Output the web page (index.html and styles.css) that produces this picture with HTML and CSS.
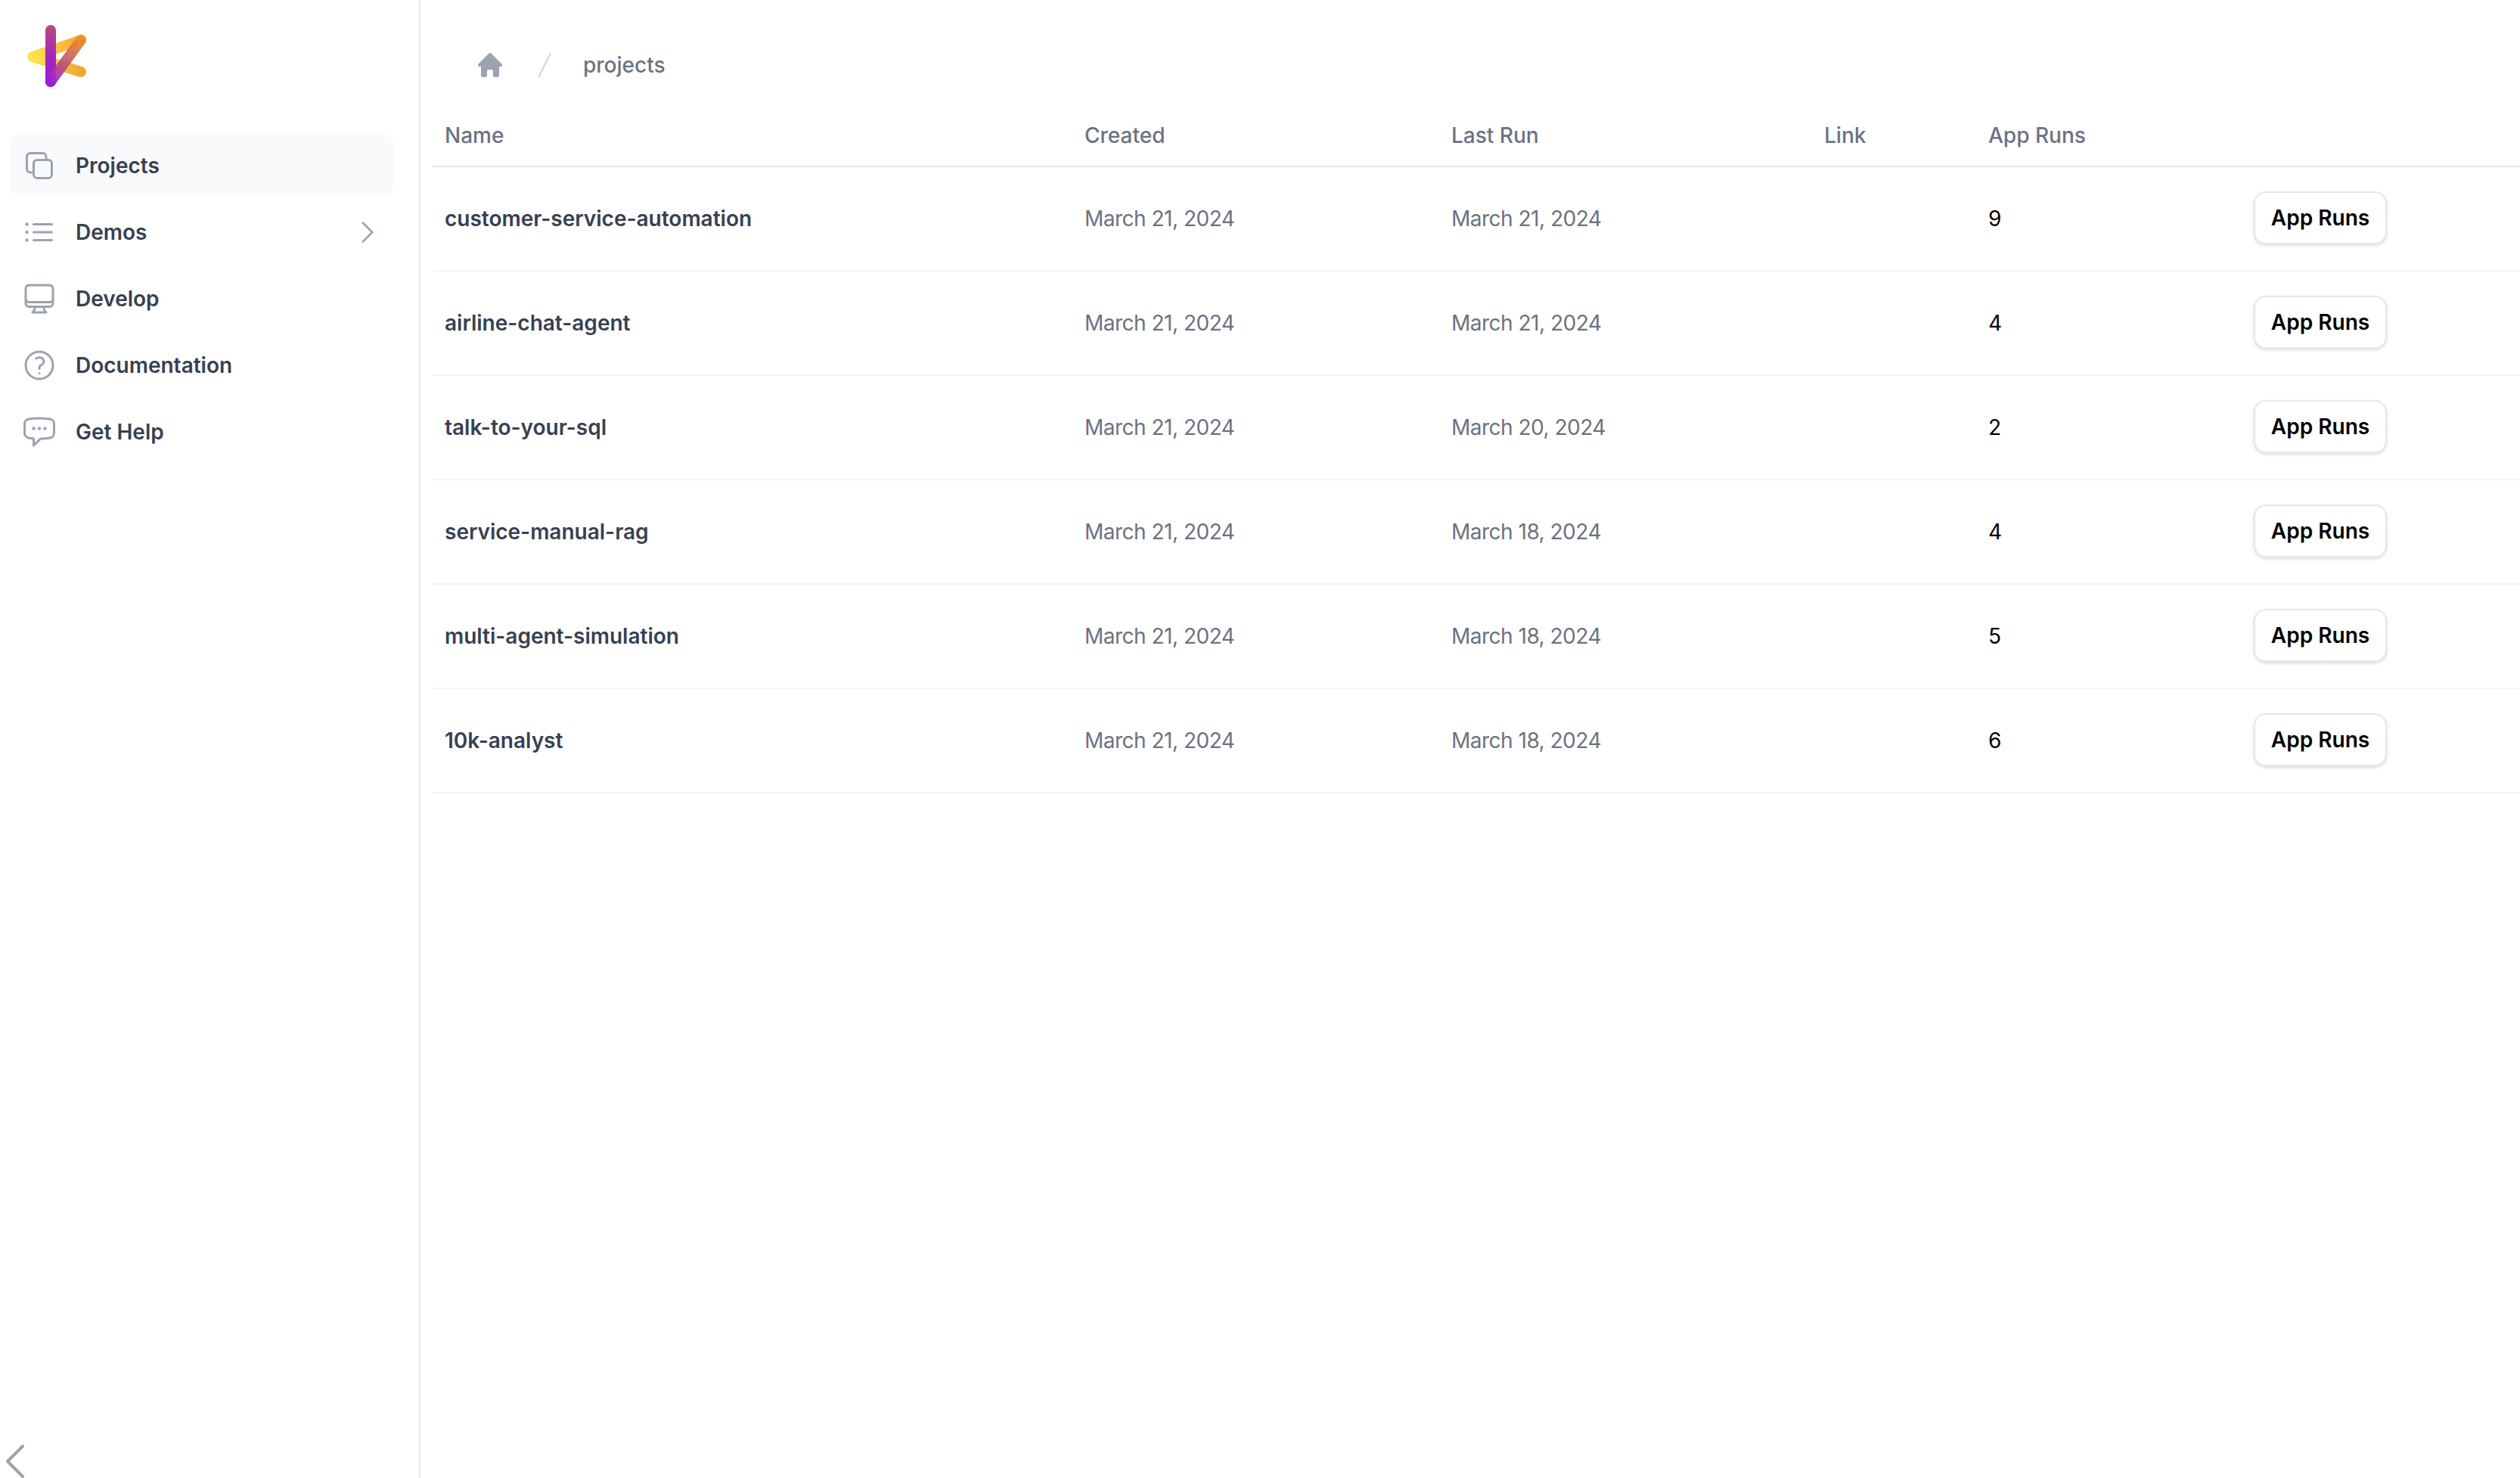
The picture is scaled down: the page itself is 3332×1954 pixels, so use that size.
FILE: index.html
```html
<!DOCTYPE html>
<html lang="en">
<head>
<meta charset="utf-8">
<title>Projects</title>
<link rel="stylesheet" href="styles.css">
</head>
<body>
<div class="app">
  <aside class="sidebar">
    <div class="logo">
      <svg width="110" height="110" viewBox="20 20 110 110" fill="none" stroke-linecap="round" stroke-linejoin="round">
        <defs>
          <linearGradient id="y" gradientUnits="userSpaceOnUse" x1="36" y1="75" x2="114" y2="75"><stop offset="0" stop-color="#fdea4f"/><stop offset="1" stop-color="#f2a033"/></linearGradient>
          <linearGradient id="v" gradientUnits="userSpaceOnUse" x1="67" y1="112" x2="67" y2="34"><stop offset="0" stop-color="#9c1bd6"/><stop offset=".45" stop-color="#a323c4"/><stop offset="1" stop-color="#b84a78"/></linearGradient>
          <linearGradient id="d" gradientUnits="userSpaceOnUse" x1="67" y1="110" x2="110" y2="52"><stop offset="0" stop-color="#9c1bd6"/><stop offset=".4" stop-color="#b8507e"/><stop offset="1" stop-color="#f58a24"/></linearGradient>
        </defs>
        <path d="M107 53 43 75l64 20" stroke="url(#y)" stroke-width="14"/>
        <path d="M67 40v68" stroke="url(#v)" stroke-width="14"/>
        <path d="M67 108 107 53" stroke="url(#d)" stroke-width="14" opacity=".92"/>
      </svg>
    </div>
    <nav class="nav">
      <a class="nav-item active">
        <svg class="icon" viewBox="0 0 24 24"><path d="M16.5 8.25V6a2.25 2.25 0 00-2.25-2.25H6A2.25 2.25 0 003.75 6v8.25A2.25 2.25 0 006 16.5h2.25m8.25-8.25H18a2.25 2.25 0 012.25 2.25V18A2.25 2.25 0 0118 20.25h-7.5A2.25 2.25 0 018.25 18v-1.5m8.25-8.25h-6a2.25 2.25 0 00-2.25 2.25v6"/></svg>
        <span>Projects</span>
      </a>
      <a class="nav-item">
        <svg class="icon" viewBox="0 0 24 24"><path d="M8.25 6.75h12M8.25 12h12m-12 5.25h12M3.75 6.75h.007v.008H3.75V6.75zm.375 0a.375.375 0 11-.75 0 .375.375 0 01.75 0zM3.75 12h.007v.008H3.75V12zm.375 0a.375.375 0 11-.75 0 .375.375 0 01.75 0zm-.375 5.25h.007v.008H3.75v-.008zm.375 0a.375.375 0 11-.75 0 .375.375 0 01.75 0z"/></svg>
        <span>Demos</span>
        <svg class="chevron" viewBox="0 0 24 24"><path d="M8.25 4.5l7.5 7.5-7.5 7.5"/></svg>
      </a>
      <a class="nav-item">
        <svg class="icon" viewBox="0 0 24 24"><path d="M9 17.25v1.007a3 3 0 01-.879 2.122L7.5 21h9l-.621-.621A3 3 0 0115 18.257V17.25m6-12V15a2.25 2.25 0 01-2.25 2.25H5.25A2.25 2.25 0 013 15V5.25m18 0A2.25 2.25 0 0018.75 3H5.25A2.25 2.25 0 003 5.25m18 0V12a2.25 2.25 0 01-2.25 2.25H5.25A2.25 2.25 0 013 12V5.25"/></svg>
        <span>Develop</span>
      </a>
      <a class="nav-item">
        <svg class="icon" viewBox="0 0 24 24"><path d="M9.879 7.519c1.171-1.025 3.071-1.025 4.242 0 1.172 1.025 1.172 2.687 0 3.712-.203.179-.43.326-.67.442-.745.361-1.45.999-1.45 1.827v.75M21 12a9 9 0 11-18 0 9 9 0 0118 0zm-9 5.25h.008v.008H12v-.008z"/></svg>
        <span>Documentation</span>
      </a>
      <a class="nav-item">
        <svg class="icon" viewBox="0 0 24 24"><path d="M8.625 9.75a.375.375 0 11-.75 0 .375.375 0 01.75 0zm0 0H8.25m4.125 0a.375.375 0 11-.75 0 .375.375 0 01.75 0zm0 0H12m4.125 0a.375.375 0 11-.75 0 .375.375 0 01.75 0zm0 0h-.375m-13.5 3.01c0 1.6 1.123 2.994 2.707 3.227 1.087.16 2.185.283 3.293.369V21l4.184-4.183a1.14 1.14 0 01.778-.332 48.294 48.294 0 005.83-.498c1.585-.233 2.708-1.626 2.708-3.228V6.741c0-1.602-1.123-2.995-2.707-3.228A48.394 48.394 0 0012 3c-2.392 0-4.744.175-7.043.513C3.373 3.746 2.25 5.14 2.25 6.741v6.018z"/></svg>
        <span>Get Help</span>
      </a>
    </nav>
    <div class="collapse">
      <svg viewBox="0 0 24 44"><path d="M22 2 2 22l20 20"/></svg>
    </div>
  </aside>
  <main class="main">
    <div class="crumbs">
      <svg class="home" viewBox="0 0 20 20"><path d="M9.293 2.293a1 1 0 011.414 0l7 7A1 1 0 0117 11h-1v6a1 1 0 01-1 1h-2a1 1 0 01-1-1v-3a1 1 0 00-1-1H9a1 1 0 00-1 1v3a1 1 0 01-1 1H5a1 1 0 01-1-1v-6H3a1 1 0 01-.707-1.707l7-7z"/></svg>
      <svg class="slash" viewBox="0 0 20 20"><path d="M5.555 17.776l8-16 .894.448-8 16-.894-.448z"/></svg>
      <span class="crumb-text">projects</span>
    </div>
    <table class="table">
      <colgroup>
        <col class="col-name"><col class="col-created"><col class="col-last"><col class="col-link"><col class="col-runs"><col>
      </colgroup>
      <thead>
        <tr><th>Name</th><th>Created</th><th>Last Run</th><th>Link</th><th>App Runs</th><th></th></tr>
      </thead>
      <tbody>
        <tr><td class="name">customer-service-automation</td><td class="date">March 21, 2024</td><td class="date">March 21, 2024</td><td></td><td class="num">9</td><td><button class="btn">App Runs</button></td></tr>
        <tr><td class="name">airline-chat-agent</td><td class="date">March 21, 2024</td><td class="date">March 21, 2024</td><td></td><td class="num">4</td><td><button class="btn">App Runs</button></td></tr>
        <tr><td class="name">talk-to-your-sql</td><td class="date">March 21, 2024</td><td class="date">March 20, 2024</td><td></td><td class="num">2</td><td><button class="btn">App Runs</button></td></tr>
        <tr><td class="name">service-manual-rag</td><td class="date">March 21, 2024</td><td class="date">March 18, 2024</td><td></td><td class="num">4</td><td><button class="btn">App Runs</button></td></tr>
        <tr><td class="name">multi-agent-simulation</td><td class="date">March 21, 2024</td><td class="date">March 18, 2024</td><td></td><td class="num">5</td><td><button class="btn">App Runs</button></td></tr>
        <tr><td class="name">10k-analyst</td><td class="date">March 21, 2024</td><td class="date">March 18, 2024</td><td></td><td class="num">6</td><td><button class="btn">App Runs</button></td></tr>
      </tbody>
    </table>
  </main>
</div>
</body>
</html>
```
FILE: styles.css
```css
* { box-sizing: border-box; }
html, body { margin: 0; padding: 0; height: 100%; background: #fff; }
body { font-family: Inter, "Liberation Sans", sans-serif; font-size: 28px; line-height: 40px; overflow: hidden; }

.app { display: flex; height: 1954px; }

.sidebar {
  width: 556px;
  flex: none;
  display: flex;
  flex-direction: column;
  border-right: 2px solid #e5e7eb;
}
.logo { height: 178px; padding: 20px 0 0 20px; }
.logo svg { display: block; }

.nav { display: flex; flex-direction: column; gap: 8px; padding: 0 34px 0 13px; }
.nav-item {
  display: flex;
  align-items: center;
  gap: 24px;
  height: 80px;
  padding: 1px 16px 0 15px;
  border-radius: 12px;
  font-weight: 600;
  color: #374151;
}
.nav-item.active { background: #f9fafb; }
.icon { width: 48px; height: 48px; flex: none; fill: none; stroke: #9ca3af; stroke-width: 1.5; stroke-linecap: round; stroke-linejoin: round; }
.chevron { width: 40px; height: 40px; margin: 0 -2px 0 auto; fill: none; stroke: #9ca3af; stroke-width: 1.5; stroke-linecap: round; stroke-linejoin: round; }

.collapse { margin-top: auto; padding: 0 0 0 8px; line-height: 0; }
.collapse svg { width: 24px; height: 44px; fill: none; stroke: #9ca3af; stroke-width: 4; stroke-linecap: round; stroke-linejoin: round; }

.main { flex: 1; min-width: 0; padding-left: 16px; }

.crumbs { display: flex; align-items: center; height: 133px; padding: 38px 0 0 56px; color: #6b7280; }
.home { width: 40px; height: 40px; fill: #9ca3af; flex: none; }
.slash { width: 40px; height: 40px; fill: #d1d5db; flex: none; margin: 0 31px 0 32px; }
.crumb-text { font-weight: 500; }

.table { width: 100%; border-collapse: collapse; table-layout: fixed; }
.col-name { width: 846px; }
.col-created { width: 485px; }
.col-last { width: 493px; }
.col-link { width: 217px; }
.col-runs { width: 351px; }

th { height: 87px; padding: 6px 16px 0; text-align: left; font-weight: 500; color: #6b7280; border-bottom: 2px solid #e5e7eb; vertical-align: middle; }
td { height: 138px; padding: 0 16px; color: #6b7280; border-bottom: 2px solid #f3f4f6; vertical-align: middle; }
.name { font-weight: 600; color: #374151; }
.date { letter-spacing: -.5px; }
.num { font-weight: 400; color: #000; }

.btn {
  display: inline-flex;
  align-items: center;
  justify-content: center;
  width: 176px;
  height: 70px;
  margin-bottom: 2px;
  padding: 0;
  font: 600 28px/40px Inter, "Liberation Sans", sans-serif;
  color: #000;
  background: #fff;
  border: 2px solid #e5e7eb;
  border-radius: 16px;
  box-shadow: 0 2px 4px rgba(0, 0, 0, .14);
}
```
